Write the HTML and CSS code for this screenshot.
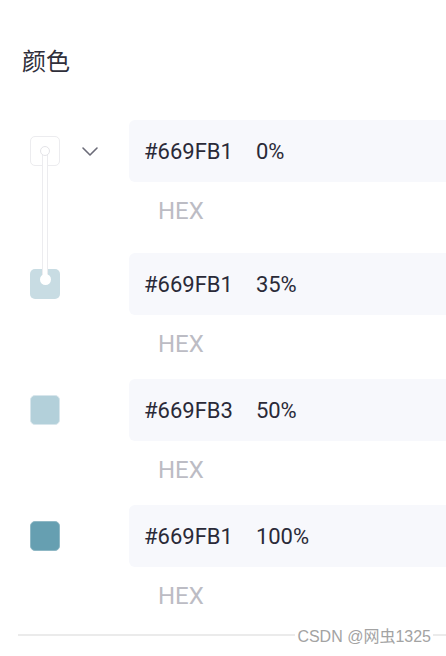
FILE: index.html
```html
<!DOCTYPE html>
<html lang="zh">
<head>
<meta charset="utf-8">
<link rel="stylesheet" href="styles.css">
</head>
<body>
<div class="panel">
  <h2 class="title">颜色</h2>
  <div class="stops">
    <div class="slider">
      <span class="track"></span>
      <span class="knob knob-top"></span>
      <span class="knob knob-bottom"></span>
    </div>
    <div class="row row-first">
      <div class="swatch-col">
        <span class="swatch sw0"></span>
      </div>
      <div class="chev-col">
        <svg class="chev" width="18" height="12" viewBox="0 0 18 12"><path d="M2 3 L9 10 L16 3" fill="none" stroke="#6b6b78" stroke-width="1.6" stroke-linecap="round" stroke-linejoin="round"/></svg>
      </div>
      <div class="field-col">
        <div class="field"><span class="hex">#669FB1</span><span class="pct">0%</span></div>
        <div class="label">HEX</div>
      </div>
    </div>
    <div class="row">
      <div class="swatch-col"><span class="swatch sw35"></span></div>
      <div class="chev-col"></div>
      <div class="field-col">
        <div class="field"><span class="hex">#669FB1</span><span class="pct">35%</span></div>
        <div class="label">HEX</div>
      </div>
    </div>
    <div class="row">
      <div class="swatch-col"><span class="swatch sw50"></span></div>
      <div class="chev-col"></div>
      <div class="field-col">
        <div class="field"><span class="hex">#669FB3</span><span class="pct">50%</span></div>
        <div class="label">HEX</div>
      </div>
    </div>
    <div class="row">
      <div class="swatch-col"><span class="swatch sw100"></span></div>
      <div class="chev-col"></div>
      <div class="field-col">
        <div class="field"><span class="hex">#669FB1</span><span class="pct">100%</span></div>
        <div class="label">HEX</div>
      </div>
    </div>
  </div>
  <div class="divider"></div>
  <div class="watermark">CSDN @网虫1325</div>
</div>
</body>
</html>
```
FILE: styles.css
```css
html, body {
  margin: 0;
  padding: 0;
  background: #ffffff;
}
body {
  font-family: Roboto, "Noto Sans CJK SC", sans-serif;
  width: 446px;
  height: 656px;
  overflow: hidden;
}
.panel {
  position: relative;
  height: 656px;
}
.title {
  margin: 0;
  padding: 44px 0 0 22px;
  height: 76px;
  box-sizing: border-box;
  font-size: 24px;
  font-weight: 400;
  line-height: 32px;
  color: #2f2f3a;
  font-family: "Noto Sans CJK SC", sans-serif;
}
.stops {
  position: relative;
  margin-top: 44px;
}
.row {
  display: flex;
  align-items: flex-start;
  height: 126px;
}
.row-first {
  height: 133px;
}
.swatch-col {
  width: 30px;
  margin-left: 30px;
  height: 62px;
  display: flex;
  align-items: center;
}
.swatch {
  display: block;
  width: 30px;
  height: 30px;
  border-radius: 5px;
  box-sizing: border-box;
}
.sw0 {
  background: #ffffff;
  border: 1px solid #ececef;
}
.sw35 {
  background: #c8dce3;
}
.sw50 {
  background: #b3d0da;
  border: 1px solid #d8e6ec;
}
.sw100 {
  background: #669fb1;
  border: 1px solid #8fb8c5;
}
.chev-col {
  width: 39px;
  height: 62px;
  display: flex;
  align-items: center;
  justify-content: flex-end;
}
.chev {
  display: block;
}
.field-col {
  margin-left: 30px;
  flex: 1;
}
.field {
  height: 62px;
  background: #f7f8fc;
  border-radius: 6px 0 0 6px;
  display: flex;
  align-items: center;
  padding-left: 15px;
  font-size: 22px;
  color: #2a2a38;
  gap: 23px;
}
.label {
  padding: 14px 0 0 29px;
  font-size: 24px;
  line-height: 30px;
  color: #bcbcc4;
}
.slider {
  position: absolute;
  left: 40px;
  top: 26px;
  width: 10px;
  height: 138px;
  z-index: 2;
}
.track {
  position: absolute;
  left: 2px;
  top: 4px;
  width: 4px;
  height: 130px;
  background: #ffffff;
  border-left: 1px solid #ececef;
  border-right: 1px solid #ececef;
  box-sizing: content-box;
}
.knob {
  position: absolute;
  border-radius: 50%;
  background: #ffffff;
}
.knob-top {
  left: 0;
  top: 0;
  width: 8px;
  height: 8px;
  border: 1px solid #e4e4e8;
}
.knob-bottom {
  left: -0.5px;
  top: 128px;
  width: 11px;
  height: 11px;
}
.divider {
  position: absolute;
  left: 18px;
  right: 0;
  top: 634px;
  height: 2px;
  background: #ebebeb;
}
.watermark {
  position: absolute;
  right: 13px;
  top: 627px;
  padding: 0 2px;
  background: #ffffff;
  font-family: "Liberation Sans", "Noto Sans CJK SC", sans-serif;
  font-size: 16px;
  line-height: 19px;
  color: #a3a3a3;
}
```
